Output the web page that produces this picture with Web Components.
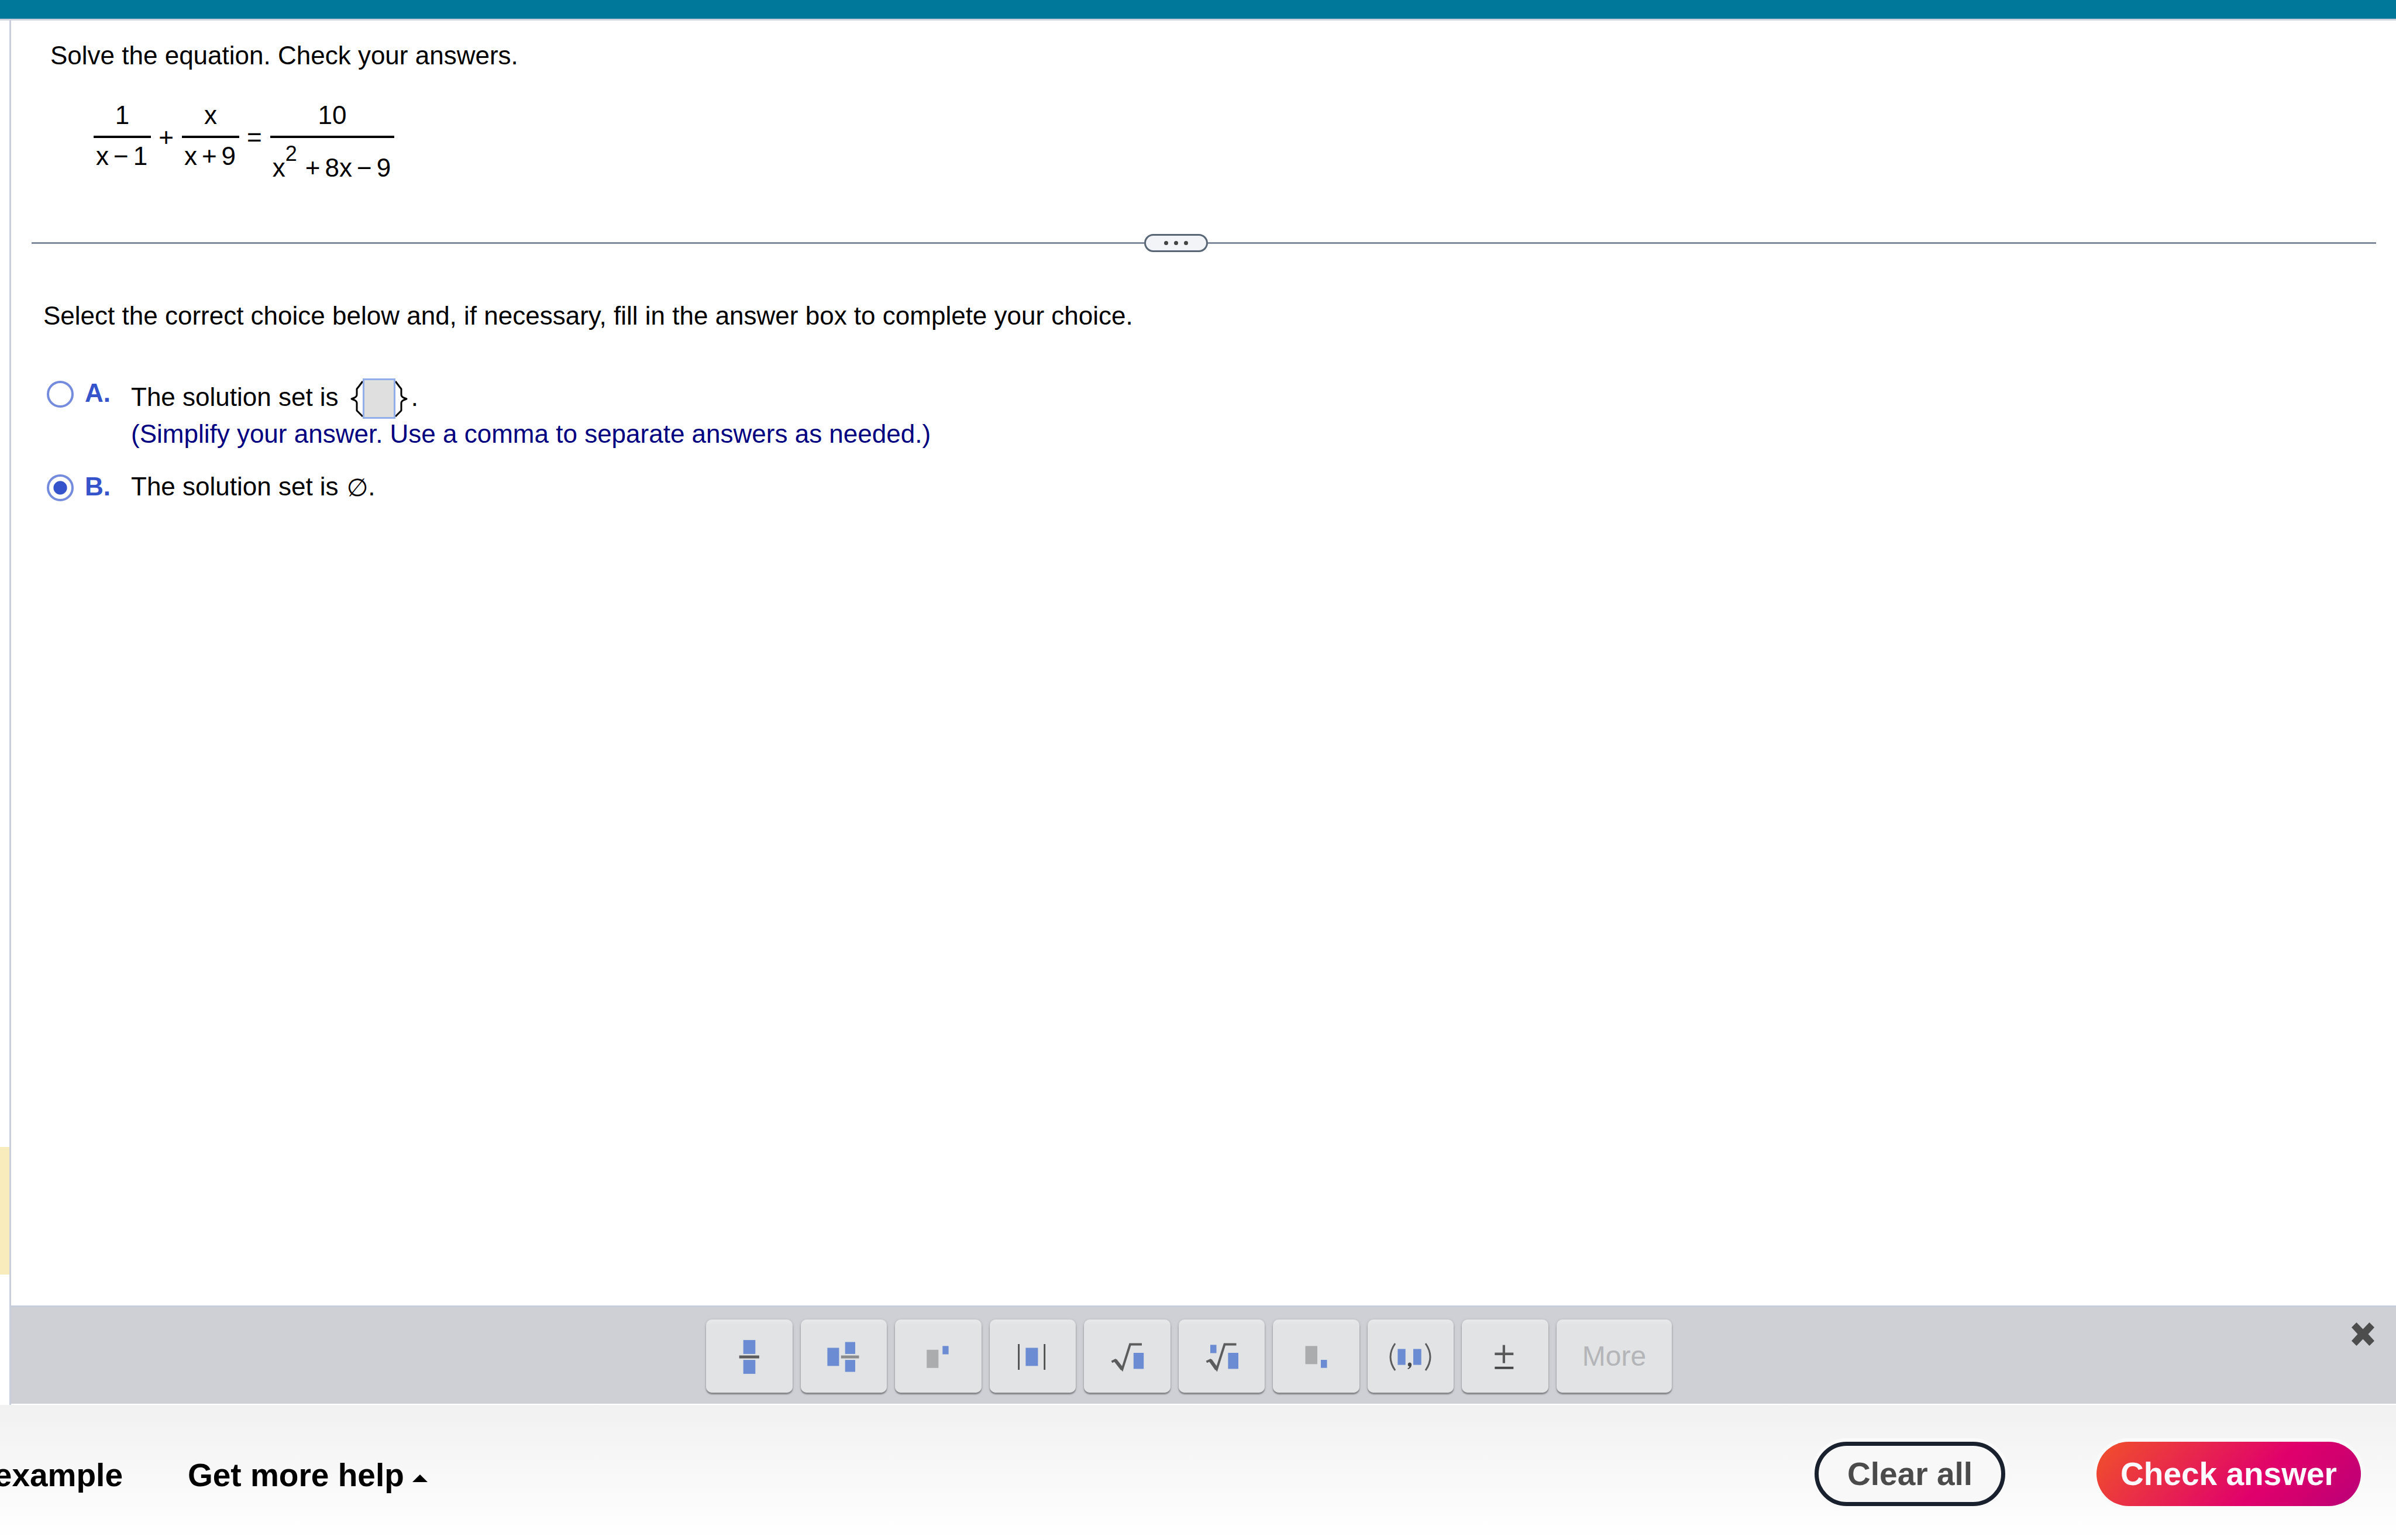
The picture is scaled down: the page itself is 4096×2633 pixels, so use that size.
<!DOCTYPE html>
<html lang="en">
<head>
<meta charset="utf-8">
<title>Solve the equation</title>
<style>
  html, body { margin: 0; height: 100%; }
  body { background: #fff; color: #000; font: 44px/50px "Liberation Sans", Arial, sans-serif; }
</style>
</head>
<body>
<exercise-page></exercise-page>

<script>
function define(name, html, setup) {
  const template = document.createElement('template');
  template.innerHTML = html;
  customElements.define(name, class extends HTMLElement {
    constructor() {
      super();
      this.attachShadow({ mode: 'open' }).appendChild(template.content.cloneNode(true));
    }
    connectedCallback() { if (setup) setup(this, this.shadowRoot); }
  });
}

/* A fraction: numerator over bar over denominator */
define('eq-fraction', `
  <style>
    :host { display: inline-flex; flex-direction: column; align-items: stretch; text-align: center; }
    .num { padding-bottom: 10px; }
    .bar { height: 4px; background: #000; }
    .den { padding: 6px 6px 0 4px; white-space: nowrap; }
  </style>
  <div class="num"><slot name="num"></slot></div>
  <div class="bar"></div>
  <div class="den"><slot></slot></div>`);

define('eq-op', `
  <style>:host { display: inline-block; margin: 0 8px; }</style><slot></slot>`);

define('equation-view', `
  <style>
    :host { display: flex; align-items: flex-start; }
    sup { font-size: 36px; line-height: 42px; vertical-align: 27px; }
    .mid { padding-top: 38px; margin: 0 14px 0 13px; }
    eq-op.tight { margin-left: 14px; }
  </style>
  <eq-fraction><span slot="num">1</span>x<eq-op>−</eq-op>1</eq-fraction>
  <span class="mid">+</span>
  <eq-fraction><span slot="num">x</span>x<eq-op>+</eq-op>9</eq-fraction>
  <span class="mid">=</span>
  <eq-fraction><span slot="num">10</span>x<sup>2</sup><eq-op class="tight">+</eq-op>8x<eq-op>−</eq-op>9</eq-fraction>`);

/* Horizontal rule with an expander pill */
define('section-divider', `
  <style>
    :host { display: flex; align-items: center; }
    .line { flex: 20; height: 3px; background: #808b9d; }
    .line:last-child { flex: 21; }
    button { display: flex; align-items: center; justify-content: center; gap: 10px; box-sizing: border-box;
      width: 109px; height: 31px; padding: 0; border: 3px solid #586675; border-radius: 16px; background: #f3f4f7; }
    i { width: 7px; height: 7px; border-radius: 50%; background: #444; }
  </style>
  <div class="line"></div>
  <button type="button" aria-label="Expand"><i></i><i></i><i></i></button>
  <div class="line"></div>`);

/* One answer choice: radio, letter, content */
define('answer-choice', `
  <style>
    :host { display: grid; grid-template-columns: 144px 1fr; }
    label { display: flex; align-items: flex-start; gap: 19px; color: #3553ca; font-weight: bold; }
    input { appearance: none; box-sizing: border-box; width: 46px; height: 46px; margin: 4px 0 0; flex: none;
      border: 4px solid #758bdd; border-radius: 50%; background: #fff; }
    input:checked { background: radial-gradient(circle closest-side, #3553ca 0 58%, #fff 64%); }
  </style>
  <label><input type="radio"><span></span></label>
  <div><slot></slot></div>`,
  (host, root) => {
    root.querySelector('span').textContent = host.getAttribute('letter') + '.';
    root.querySelector('input').checked = host.hasAttribute('checked');
  });

/* Answer box between curly braces */
define('set-box', `
  <style>
    :host { display: inline-flex; align-items: center; }
    input { box-sizing: border-box; width: 56px; height: 69px; padding: 0; border: 3px solid #91aee8;
      border-radius: 0; background: #dfdfdf; font: inherit; text-align: center; }
    svg { width: 21px; height: 62px; fill: none; stroke: #000; stroke-width: 3; stroke-linejoin: round; }
  </style>
  <svg viewBox="0 0 21 62"><path d="M21 1 L15 9 L11 14 V24 Q11 27 7 29 L2 31 L7 33 Q11 35 11 38 V51 L21 61"/></svg>
  <input type="text" aria-label="Solution set">
  <svg viewBox="0 0 21 62"><path d="M0 1 L6 9 L10 14 V24 Q10 27 14 29 L19 31 L14 33 Q10 35 10 38 V51 L0 61"/></svg>`);

const B = '#6b8cd2', G = '#abacae', D = '#5c5c5c';
const rect = (x, y, w, h, f) => `<rect x="${x}" y="${y}" width="${w}" height="${h}" fill="${f}"/>`;
const icons = {
  Fraction: rect(-10.3,-27.9,20.6,23.8,B) + rect(-10.3,6.1,20.6,23.8,B) + rect(-17.3,-1.5,34.2,5,D),
  'Mixed number': rect(-27.6,-14.6,20,31,B) + rect(2.7,-24.5,17.3,20.4,B) + rect(2.7,6.1,17.3,20.4,B) + rect(-4.3,-1.5,30.8,5,'#8a8b8c'),
  Exponent: rect(-19.8,-11.2,20.1,31,G) + rect(7.3,-17.7,10.3,14.2,B),
  'Absolute value': rect(-24.8,-21,2.8,44,'#4c4c4c') + rect(-11.6,-14.6,21,31,B) + rect(19.3,-21,2.8,44,'#4c4c4c'),
  'Square root': `<path d="M-26.500 9.500 L-20.500 6.500 L-8.500 22 L5 -20.500 H25" fill="none" stroke="${D}" stroke-width="4"/><path d="M-20.500 6.500 L-8.500 22" stroke="${D}" stroke-width="6"/>` + rect(10.8,-6,17.4,27.4,B),
  'Nth root': `<path d="M-26.500 9.500 L-20 6.500 L-9 22 L4.500 -20.500 H24.500" fill="none" stroke="${D}" stroke-width="4"/><path d="M-20 6.500 L-9 22" stroke="${D}" stroke-width="6"/>` + rect(-20,-19.7,10.5,14.2,B) + rect(10.4,-6,17.6,27.4,B),
  Subscript: rect(-18.5,-17.7,20.5,31,G) + rect(8,6,10.5,13.7,B),
  'Ordered pair': `<path d="M-27 -22 Q-43 1 -27 24 M25 -22 Q41 1 25 24" fill="none" stroke="${D}" stroke-width="3"/>` + rect(-22.6,-12.6,13.3,27.2,B) + rect(4,-12.6,13.7,27.2,B) + `<path d="M-2.500 10.500 a3.600 3.600 0 0 1 3.600 3.800 Q1 20 -5 22 L-5.800 20.500 Q-2.800 19.500 -2.500 17.500 A3.600 3.600 0 0 1 -2.500 10.500Z" fill="#444"/>`,
  'Plus or minus': rect(-17.7,-6.4,32,4.4,'#5a5a5a') + rect(-4.2,-19.4,4.2,31,'#5a5a5a') + rect(-17.7,17.7,32,4,'#444')
};

define('palette-key', `
  <style>
    :host { display: block; }
    button { display: flex; align-items: center; justify-content: center; width: 100%; height: 125px; padding: 0;
      border: 0; border-radius: 10px; background: linear-gradient(#e8e9eb, #e2e3e5 10px);
      box-shadow: 0 3px 2px #85878a, 0 1px 4px #a4a5aa; font: 48px/54px "Liberation Sans", Arial, sans-serif; color: #b4b5b8; }
    svg { width: 100px; height: 80px; }
  </style>
  <button type="button"><slot></slot></button>`,
  (host, root) => {
    const name = host.getAttribute('icon');
    if (!name) return;
    const button = root.querySelector('button');
    button.setAttribute('aria-label', name);
    button.innerHTML = `<svg viewBox="-50 -40 100 80" aria-hidden="true">${icons[name]}</svg>`;
  });

define('math-palette', `
  <style>
    :host { display: flex; align-items: flex-start; justify-content: space-between; border-top: 3px solid #c6cedb;
      background: #cfd0d6; padding: 21px 37px 19px 26px; margin-bottom: 2px; }
    .keys { display: grid; grid-template-columns: repeat(9, 1fr) 197px; gap: 14px; width: 1651px; margin: 0 auto; }
    .close { width: 39px; height: 50px; padding: 0; border: 0; background: none; display: flex; align-items: center; }
    .close svg { width: 39px; height: 40px; fill: #4d4d4d; }
  </style>
  <div class="keys"></div>
  <button class="close" type="button" aria-label="Close">
    <svg viewBox="0 0 39 40"><path d="M8.500 0 L19.500 11.500 L30.500 0 L39 8.500 L28.500 20 L39 31.500 L30.500 40 L19.500 28.500 L8.500 40 L0 31.500 L10.500 20 L0 8.500Z"/></svg>
  </button>`,
  (host, root) => {
    root.querySelector('.keys').innerHTML =
      Object.keys(icons).map(n => `<palette-key icon="${n}"></palette-key>`).join('') + '<palette-key>More</palette-key>';
  });

define('pill-button', `
  <style>
    :host { display: block; }
    button { box-sizing: border-box; height: 110px; padding: 0 41px; border: 0; border-radius: 55px; color: #fafaff;
      font: bold 55px/60px "Liberation Sans", Arial, sans-serif; white-space: nowrap; box-shadow: 0 0 0 6px #fafafa;
      background: linear-gradient(132deg, #ef4b2f 5%, #e0006c 63%, #d0006e 80%, #b8007a); }
    :host([outline]) button { padding: 0 49px; border: 7px solid #1a212e; background: #f8f8f8; color: #4b4b4b; }
  </style>
  <button type="button"><slot></slot></button>`);

define('action-bar', `
  <style>
    :host { display: flex; align-items: center; height: 231px; box-sizing: border-box; padding: 4px 60px 0 0;
      background: linear-gradient(#f1f1f1, #fff); font: bold 55px/60px "Liberation Sans", Arial, sans-serif; }
    a { color: #000; text-decoration: none; }
    .cut, .help { padding: 4px 0 0; }
    .cut { display: flex; justify-content: flex-end; width: 210px; overflow: hidden; margin-right: 111px; }
    .help { display: flex; align-items: center; gap: 14px; border: 0; background: none; font: inherit; color: #000; }
    .help svg { width: 26px; height: 13px; margin-top: 12px; }
    .right { display: flex; gap: 156px; margin-left: auto; }
  </style>
  <div class="cut"><a href="#">example</a></div>
  <button class="help" type="button">Get more help<svg viewBox="0 0 26 13"><path d="M0 13 L13 0 L26 13Z"/></svg></button>
  <div class="right">
    <pill-button outline>Clear all</pill-button>
    <pill-button>Check answer</pill-button>
  </div>`);

define('exercise-page', `
  <style>
    :host { display: flex; flex-direction: column; min-height: 100vh; overflow: hidden; }
    header { height: 32px; background: #007899; border-bottom: 3px solid #cccfdc; }
    .body { flex: 1; display: flex; }
    .rail { width: 16px; display: flex; flex-direction: column; justify-content: flex-end; border-right: 3px solid #c9cfde; }
    .mark { height: 218px; margin-bottom: 223px; background: #f8ebbc; }
    .main { flex: 1; display: flex; flex-direction: column; }
    .question { padding: 35px 67px 88px; }
    .question p { margin: 0 0 52px; }
    equation-view { padding-left: 74px; }
    section-divider { margin: 0 34px 84px 35px; }
    .answers { flex: 1; padding-left: 55px; }
    .answers p { margin: 0; }
    .list { padding: 82px 0 0 6px; display: grid; gap: 40px; }
    .row { display: flex; align-items: flex-start; }
    .low { padding-top: 7px; }
    set-box { margin: 0 6px 0 20px; }
    .hint { color: #000080; margin-top: 1px; }
    .empty { font: 42px/54px "DejaVu Sans", sans-serif; margin-left: 14px; }
  </style>
  <header></header>
  <div class="body">
    <div class="rail"><div class="mark"></div></div>
    <div class="main">
      <div class="question">
        <p>Solve the equation. Check your answers.</p>
        <equation-view></equation-view>
      </div>
      <section-divider></section-divider>
      <div class="answers">
        <p>Select the correct choice below and, if necessary, fill in the answer box to complete your choice.</p>
        <div class="list">
          <answer-choice letter="A">
            <div class="row"><span class="low">The solution set is</span><set-box></set-box><span class="low">.</span></div>
            <div class="hint">(Simplify your answer. Use a comma to separate answers as needed.)</div>
          </answer-choice>
          <answer-choice letter="B" checked>
            <div class="row"><span>The solution set is</span><span class="empty">∅</span><span>.</span></div>
          </answer-choice>
        </div>
      </div>
      <math-palette></math-palette>
    </div>
  </div>
  <action-bar></action-bar>`);
</script>
</body>
</html>
